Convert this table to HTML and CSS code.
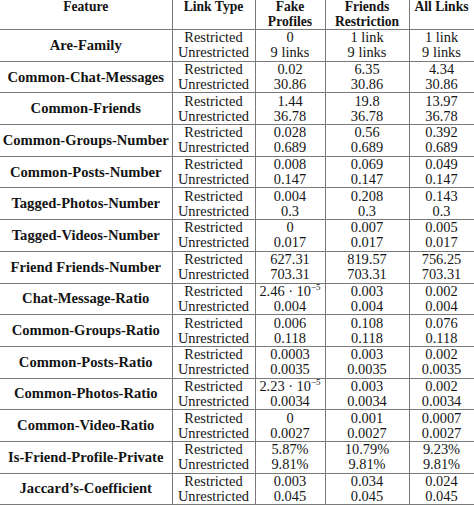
FILE: index.html
```html
<!DOCTYPE html>
<html>
<head>
<meta charset="utf-8">
<link rel="stylesheet" href="styles.css">
</head>
<body>
<table class="tbl">
  <colgroup>
    <col class="c-feat"><col class="c-type"><col class="c-fake"><col class="c-fr"><col class="c-all">
  </colgroup>
  <thead>
    <tr class="head">
      <th class="feat">Feature</th>
      <th>Link Type</th>
      <th>Fake<br>Profiles</th>
      <th>Friends<br>Restriction</th>
      <th>All Links</th>
    </tr>
  </thead>
  <tbody>
    <tr><td class="feat">Are-Family</td><td>Restricted<br>Unrestricted</td><td>0<br>9 links</td><td>1 link<br>9 links</td><td>1 link<br>9 links</td></tr>
    <tr><td class="feat">Common-Chat-Messages</td><td>Restricted<br>Unrestricted</td><td>0.02<br>30.86</td><td>6.35<br>30.86</td><td>4.34<br>30.86</td></tr>
    <tr><td class="feat">Common-Friends</td><td>Restricted<br>Unrestricted</td><td>1.44<br>36.78</td><td>19.8<br>36.78</td><td>13.97<br>36.78</td></tr>
    <tr><td class="feat">Common-Groups-Number</td><td>Restricted<br>Unrestricted</td><td>0.028<br>0.689</td><td>0.56<br>0.689</td><td>0.392<br>0.689</td></tr>
    <tr><td class="feat">Common-Posts-Number</td><td>Restricted<br>Unrestricted</td><td>0.008<br>0.147</td><td>0.069<br>0.147</td><td>0.049<br>0.147</td></tr>
    <tr><td class="feat">Tagged-Photos-Number</td><td>Restricted<br>Unrestricted</td><td>0.004<br>0.3</td><td>0.208<br>0.3</td><td>0.143<br>0.3</td></tr>
    <tr><td class="feat">Tagged-Videos-Number</td><td>Restricted<br>Unrestricted</td><td>0<br>0.017</td><td>0.007<br>0.017</td><td>0.005<br>0.017</td></tr>
    <tr><td class="feat">Friend Friends-Number</td><td>Restricted<br>Unrestricted</td><td>627.31<br>703.31</td><td>819.57<br>703.31</td><td>756.25<br>703.31</td></tr>
    <tr><td class="feat">Chat-Message-Ratio</td><td>Restricted<br>Unrestricted</td><td>2.46 · 10<sup>−5</sup><br>0.004</td><td>0.003<br>0.004</td><td>0.002<br>0.004</td></tr>
    <tr><td class="feat">Common-Groups-Ratio</td><td>Restricted<br>Unrestricted</td><td>0.006<br>0.118</td><td>0.108<br>0.118</td><td>0.076<br>0.118</td></tr>
    <tr><td class="feat">Common-Posts-Ratio</td><td>Restricted<br>Unrestricted</td><td>0.0003<br>0.0035</td><td>0.003<br>0.0035</td><td>0.002<br>0.0035</td></tr>
    <tr><td class="feat">Common-Photos-Ratio</td><td>Restricted<br>Unrestricted</td><td>2.23 · 10<sup>−5</sup><br>0.0034</td><td>0.003<br>0.0034</td><td>0.002<br>0.0034</td></tr>
    <tr><td class="feat">Common-Video-Ratio</td><td>Restricted<br>Unrestricted</td><td>0<br>0.0027</td><td>0.001<br>0.0027</td><td>0.0007<br>0.0027</td></tr>
    <tr><td class="feat">Is-Friend-Profile-Private</td><td>Restricted<br>Unrestricted</td><td>5.87%<br>9.81%</td><td>10.79%<br>9.81%</td><td>9.23%<br>9.81%</td></tr>
    <tr><td class="feat">Jaccard’s-Coefficient</td><td>Restricted<br>Unrestricted</td><td>0.003<br>0.045</td><td>0.034<br>0.045</td><td>0.024<br>0.045</td></tr>
  </tbody>
</table>
</body>
</html>
```

FILE: styles.css
```css
html, body {
  margin: 0;
  padding: 0;
  background: #ffffff;
  overflow: hidden;
}

.tbl {
  border-collapse: collapse;
  table-layout: fixed;
  width: 474px;
  font-family: "Liberation Serif", "Times New Roman", serif;
  font-size: 14.4px;
  color: #141414;
}

.c-feat { width: 172px; }
.c-type { width: 83px; }
.c-fake { width: 70px; }
.c-fr { width: 84px; }
.c-all { width: 65px; }

.tbl th,
.tbl td {
  border: 1px solid #7a7a7a;
  text-align: center;
  padding: 0;
  line-height: 15px;
  white-space: nowrap;
  overflow: hidden;
}

.tbl th:first-child,
.tbl td:first-child {
  border-left: none;
}

.tbl thead th {
  border-top: none;
  font-weight: bold;
  font-size: 13.6px;
  vertical-align: top;
  height: 29px;
  padding-top: 0;
  line-height: 14.5px;
}

.tbl tbody td {
  height: 30.7px;
  vertical-align: middle;
}

.tbl td.feat {
  font-weight: bold;
  font-size: 14.6px;
}

.tbl sup {
  font-size: 9px;
  line-height: 0;
  vertical-align: 6px;
}
```
